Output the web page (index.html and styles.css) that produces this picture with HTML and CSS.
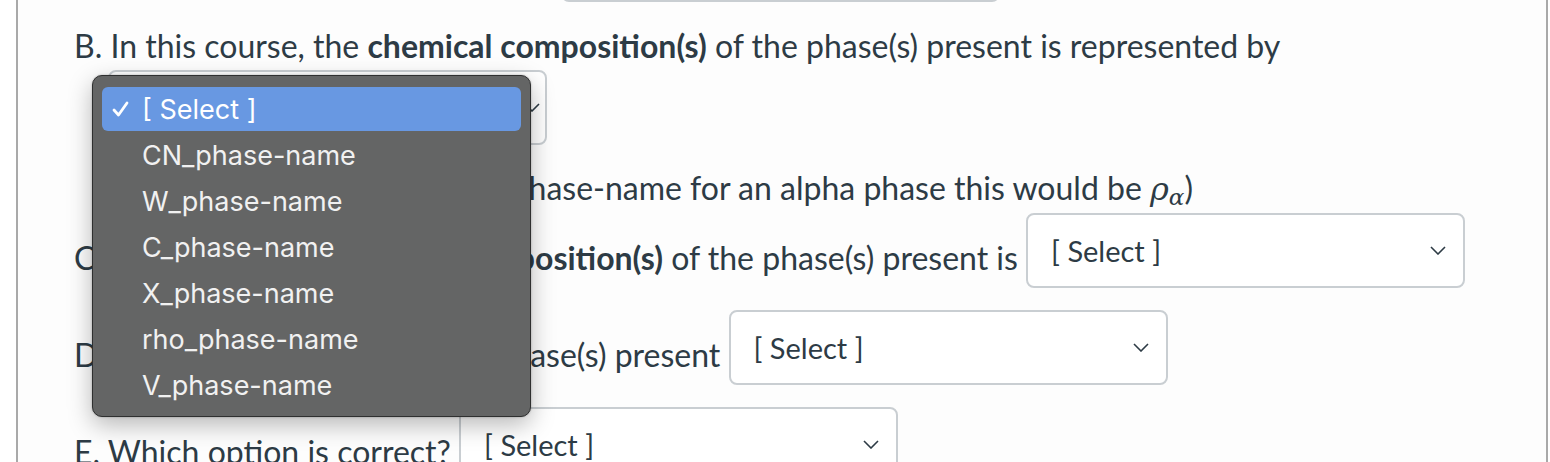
FILE: index.html
```html
<!DOCTYPE html>
<html lang="en">
<head>
    <meta charset="UTF-8">
    <meta name="viewport" content="width=device-width, initial-scale=1.0">
    <title>Quiz question</title>
    <link rel="stylesheet" href="styles.css">
</head>
<body>
    <div class="frame">
        <div class="content">
            <p class="q">A. The phase(s) present is given by
                <span class="select">[ Select ]
                    <svg class="chev" width="16" height="9" viewBox="0 0 16 9"><path d="M1 1 L8 8 L15 1"/></svg>
                </span>
            </p>

            <p class="q q-tight">B. In this course, the <b>chemical composition(s)</b> of the phase(s) present is represented by</p>
            <div class="indent">
                <p class="q q-sel">
                    <span class="select select-open">[ Select ]
                        <svg class="chev" width="16" height="9" viewBox="0 0 16 9"><path d="M1 1 L8 8 L15 1"/></svg>
                    </span>
                </p>
                <p class="q q-note">(e.g., if you have chosen rho_phase-name for an alpha phase this would be <span class="math"><i>ρ</i><sub><i>α</i></sub></span>)</p>
            </div>

            <p class="q">C. In this course, the <b>molar composition(s)</b> of the phase(s) present is
                <span class="select">[ Select ]
                    <svg class="chev" width="16" height="9" viewBox="0 0 16 9"><path d="M1 1 L8 8 L15 1"/></svg>
                </span>
            </p>

            <p class="q">D. The <b>mass fraction(s)</b> of the phase(s) present
                <span class="select">[ Select ]
                    <svg class="chev" width="16" height="9" viewBox="0 0 16 9"><path d="M1 1 L8 8 L15 1"/></svg>
                </span>
            </p>

            <p class="q">E. Which option is correct?
                <span class="select">[ Select ]
                    <svg class="chev" width="16" height="9" viewBox="0 0 16 9"><path d="M1 1 L8 8 L15 1"/></svg>
                </span>
            </p>
        </div>

        <!-- open native menu for the B select -->
        <ul class="menu">
            <li class="menu-item active">
                <svg class="check" width="17" height="16" viewBox="0 0 17 16"><path d="M2 9 L6.5 14 L15 2"/></svg>
                [ Select ]
            </li>
            <li class="menu-item">CN_phase-name</li>
            <li class="menu-item">W_phase-name</li>
            <li class="menu-item">C_phase-name</li>
            <li class="menu-item">X_phase-name</li>
            <li class="menu-item">rho_phase-name</li>
            <li class="menu-item">V_phase-name</li>
        </ul>
    </div>
</body>
</html>
```

FILE: styles.css
```css
body {
    margin: 0;
    background: #fff;
    font-family: Lato, "Open Sans", sans-serif;
    font-size: 32px;
    color: #2d3b45;
}

.frame {
    position: relative;
    min-height: 100vh;
    margin: 0 2px 0 16px;
    padding: 0 20px 0 56px;
    border-left: 2px solid #a9a9a9;
    border-right: 2px solid #a9a9a9;
    background: #fdfdfd;
    box-sizing: border-box;
    overflow: hidden;
}

.content {
    margin-top: -73px;
}

.q {
    margin: 0 0 22px;
    line-height: 44px;
    white-space: nowrap;
}

.q b {
    font-weight: 700;
}

.q-tight {
    margin-bottom: 0;
}

.indent {
    padding-left: 34px;
}

.q-sel {
    margin: 2px 0 31px;
}

.q-note {
    line-height: 24px;
    margin-bottom: 4px;
}

.math {
    font-family: "DejaVu Serif", "Liberation Serif", serif;
    font-size: 32px;
}

.math sub {
    font-size: 23px;
    vertical-align: -5px;
}

.select {
    display: inline-flex;
    align-items: center;
    justify-content: space-between;
    width: 439px;
    height: 75px;
    padding: 0 17px 0 23px;
    border: 2px solid #c9ced2;
    border-radius: 8px;
    background: #fff;
    box-sizing: border-box;
    vertical-align: 8px;
    font-size: 29px;
    line-height: normal;
}

/* native control while its menu is open: arrow sits tight to the edge */
.select-open {
    padding-right: 5px;
}

.chev path {
    fill: none;
    stroke: #2d3b45;
    stroke-width: 1.6;
}

.menu {
    position: absolute;
    left: 74px;
    top: 75px;
    display: flex;
    flex-direction: column;
    width: 439px;
    height: 342px;
    margin: 0;
    padding: 10px 9px 8px;
    list-style: none;
    box-sizing: border-box;
    background: #646565;
    border: 1px solid #2f3030;
    border-radius: 10px;
    box-shadow: 0 8px 24px rgba(0, 0, 0, 0.28), 0 0 2px rgba(0, 0, 0, 0.3);
    font-family: Inter, "Noto Sans", sans-serif;
    font-size: 27px;
    color: #f1f1f1;
}

.menu-item {
    display: flex;
    align-items: center;
    flex: none;
    height: 44px;
    margin: 1px 0;
    padding-left: 40px;
    border-radius: 6px;
}

.menu-item.active {
    padding-left: 10px;
    background: #6898e2;
    color: #fff;
}

.check {
    margin-right: 13px;
}

.check path {
    fill: none;
    stroke: #fff;
    stroke-width: 2.8;
    stroke-linecap: round;
    stroke-linejoin: round;
}
```
